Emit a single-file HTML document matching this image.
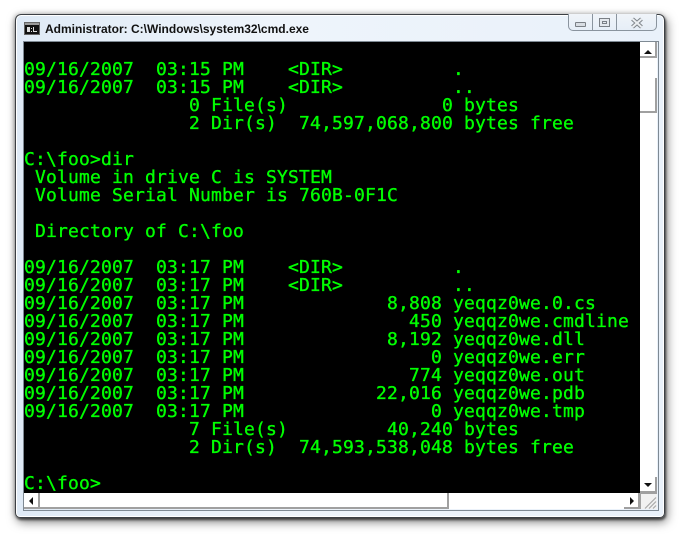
<!DOCTYPE html>
<html><head><meta charset="utf-8">
<style>
html,body{margin:0;padding:0;background:#fff;width:684px;height:537px;overflow:hidden}
.win{position:absolute;left:15px;top:14px;width:650px;height:504px;box-sizing:border-box;border:1px solid #3c4045;border-radius:6px 6px 5px 5px;background:linear-gradient(90deg,#dfeaf6,#eef4fb 40%,#e9f1fa);box-shadow:1px 2px 2px rgba(0,0,0,.55),2px 4px 10px rgba(0,0,0,.5),-1px 0 5px rgba(0,0,0,.25),inset 0 0 0 1px #fff}
.title{position:absolute;left:45px;top:21px;font:bold 12px/16px "Liberation Sans",sans-serif;color:#111;white-space:pre;transform-origin:0 0}
.term{position:absolute;left:24px;top:42px;width:616px;height:451px;background:#000;overflow:hidden}
pre{margin:0;padding-top:1px;font:18px/18px "DejaVu Sans Mono",monospace;letter-spacing:.164px;color:#00ff00;-webkit-text-stroke:.35px #00ff00}
.frame{position:absolute;left:23px;top:41px;width:634px;height:468px;box-sizing:content-box;border:1px solid #7f8a94;border-width:1px 1px 1px 1px}
.abs{position:absolute;box-sizing:border-box}
.btn{background:#fff;border-right:2px solid #a0a0a0;border-bottom:2px solid #a0a0a0}
</style></head><body>
<div class="win"></div>
<div class="frame"></div>
<svg class="abs" style="left:24px;top:22px" width="16" height="13" viewBox="0 0 16 13"><rect x="0.5" y="0.5" width="15" height="12" fill="#111" stroke="#666"/><rect x="1" y="1" width="14" height="2" fill="#9a9a9a"/><rect x="3" y="5" width="3" height="5" fill="#ddd"/><rect x="7" y="6" width="1" height="1" fill="#ddd"/><rect x="7" y="9" width="1" height="1" fill="#ddd"/><rect x="9" y="5" width="1" height="5" fill="#ddd"/><rect x="10" y="9" width="3" height="1" fill="#ddd"/></svg>
<div class="title">Administrator: C:\Windows\system32\cmd.exe</div>
<!-- caption buttons -->
<div class="abs" style="left:568px;top:14px;width:89px;height:17px;border:1px solid #8a949e;border-top:0;border-radius:0 0 5px 5px;background:linear-gradient(#f0f4f9,#e6eef7)"></div>
<div class="abs" style="left:592px;top:14px;width:1px;height:16px;background:#8a949e"></div>
<div class="abs" style="left:616px;top:14px;width:1px;height:16px;background:#8a949e"></div>
<div class="abs" style="left:575px;top:22px;width:11px;height:5px;border:1px solid #7a7f85;border-radius:1px;background:#d8dde3"></div>
<div class="abs" style="left:599px;top:18px;width:11px;height:9px;border:1px solid #7a7f85;background:#e4e8ed"></div>
<div class="abs" style="left:602px;top:21px;width:5px;height:3px;border:1px solid #7a7f85"></div>
<svg class="abs" style="left:630px;top:17px" width="14" height="12" viewBox="0 0 14 12"><path d="M2.5 2L11.5 10M11.5 2L2.5 10" stroke="#7f858b" stroke-width="4" fill="none"/><path d="M2.5 2L11.5 10M11.5 2L2.5 10" stroke="#eceff2" stroke-width="2" fill="none"/></svg>
<div class="term"><pre>

09/16/2007  03:15 PM    &lt;DIR&gt;          .
09/16/2007  03:15 PM    &lt;DIR&gt;          ..
               0 File(s)              0 bytes
               2 Dir(s)  74,597,068,800 bytes free

C:\foo&gt;dir
 Volume in drive C is SYSTEM
 Volume Serial Number is 760B-0F1C

 Directory of C:\foo

09/16/2007  03:17 PM    &lt;DIR&gt;          .
09/16/2007  03:17 PM    &lt;DIR&gt;          ..
09/16/2007  03:17 PM             8,808 yeqqz0we.0.cs
09/16/2007  03:17 PM               450 yeqqz0we.cmdline
09/16/2007  03:17 PM             8,192 yeqqz0we.dll
09/16/2007  03:17 PM                 0 yeqqz0we.err
09/16/2007  03:17 PM               774 yeqqz0we.out
09/16/2007  03:17 PM            22,016 yeqqz0we.pdb
09/16/2007  03:17 PM                 0 yeqqz0we.tmp
               7 File(s)         40,240 bytes
               2 Dir(s)  74,593,538,048 bytes free

C:\foo&gt;</pre></div>
<!-- vertical scrollbar -->
<div class="abs" style="left:640px;top:42px;width:17px;height:451px;background:#fff"></div>
<div class="abs btn" style="left:640px;top:42px;width:17px;height:16px"></div>
<div class="abs" style="left:644px;top:50px;width:0;height:0;border:4px solid transparent;border-top:0;border-bottom:4px solid #111;border-left-width:4px;border-right-width:4px"></div>
<div class="abs btn" style="left:640px;top:78px;width:17px;height:35px"></div>
<div class="abs btn" style="left:640px;top:477px;width:17px;height:16px"></div>
<div class="abs" style="left:644px;top:483px;width:0;height:0;border:4px solid transparent;border-bottom:0;border-top:4px solid #111"></div>
<!-- horizontal scrollbar -->
<div class="abs" style="left:24px;top:493px;width:616px;height:16px;background:#fff"></div>
<div class="abs btn" style="left:24px;top:493px;width:16px;height:16px"></div>
<div class="abs" style="left:29px;top:497px;width:0;height:0;border:4px solid transparent;border-left:0;border-right:4px solid #111"></div>
<div class="abs btn" style="left:40px;top:493px;width:409px;height:16px"></div>
<div class="abs btn" style="left:624px;top:493px;width:16px;height:16px"></div>
<div class="abs" style="left:630px;top:497px;width:0;height:0;border:4px solid transparent;border-right:0;border-left:4px solid #111"></div>
<!-- size grip -->
<svg class="abs" style="left:640px;top:493px" width="17" height="16" viewBox="0 0 17 16"><rect width="17" height="16" fill="#f1f1f1"/><path d="M5 15.5L16 4.5M9 15.5L16 8.5M13 15.5L16 12.5" stroke="#a8a8a8" stroke-width="1.2" fill="none"/><path d="M0.5 0V16M0 0.5H17" stroke="#a0a0a0" fill="none"/></svg>
</body></html>
